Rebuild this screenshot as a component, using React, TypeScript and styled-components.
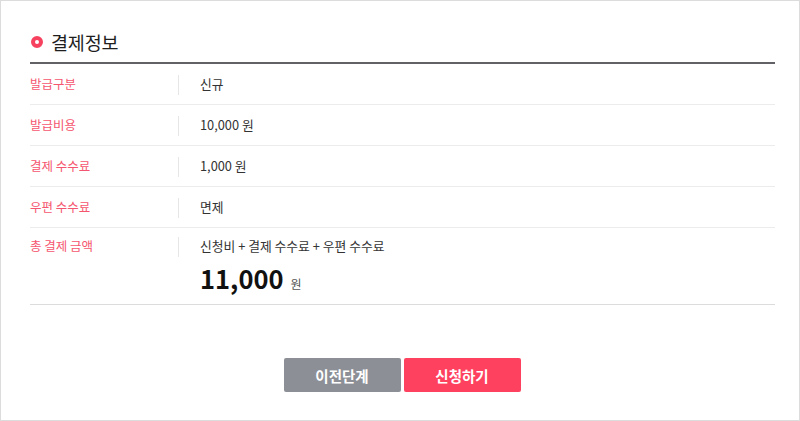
import React from 'react'
import styled, { createGlobalStyle } from 'styled-components'

const GlobalStyle = createGlobalStyle`
  html, body {
    margin: 0;
    padding: 0;
    background: #fff;
  }
  body {
    font-family: 'Noto Sans CJK KR', 'Noto Sans', sans-serif;
  }
`

type Row = {
  label: string
  value: string
}

const rows: Row[] = [
  { label: '발급구분', value: '신규' },
  { label: '발급비용', value: '10,000 원' },
  { label: '결제 수수료', value: '1,000 원' },
  { label: '우편 수수료', value: '면제' },
]

const App = () => {
  return (
    <Page>
      <GlobalStyle />
      <Heading>
        <RingIcon />
        <Title>결제정보</Title>
      </Heading>
      <Table>
        {rows.map(row => (
          <InfoRow key={row.label}>
            <Label>{row.label}</Label>
            <Value>{row.value}</Value>
          </InfoRow>
        ))}
        <InfoRow $total>
          <Label>총 결제 금액</Label>
          <Value>
            <Formula>신청비 + 결제 수수료 + 우편 수수료</Formula>
            <Total>
              <Amount>11,000</Amount>
              <Unit>원</Unit>
            </Total>
          </Value>
        </InfoRow>
      </Table>
      <Buttons>
        <Button $variant='grey'>이전단계</Button>
        <Button $variant='red'>신청하기</Button>
      </Buttons>
    </Page>
  )
}

const Page = styled.div`
  box-sizing: border-box;
  width: 800px;
  height: 421px;
  border: 1px solid #dcdcdc;
  padding: 27px 24px 0 29px;
  background: #fff;
`

const Heading = styled.div`
  display: flex;
  align-items: center;
  gap: 8px;
  height: 28px;
  padding-bottom: 6px;
  border-bottom: 2px solid #616166;
`

const RingIcon = styled.span`
  box-sizing: border-box;
  width: 12px;
  height: 12px;
  margin-left: 1px;
  border-radius: 50%;
  border: 4px solid #f6425f;
  background: #fff;
`

const Title = styled.h2`
  margin: 0;
  font-size: 18.5px;
  font-weight: 400;
  line-height: 28px;
  color: #1e1e1e;
  letter-spacing: -0.01em;
`

const Table = styled.div`
  display: flex;
  flex-direction: column;
`

const InfoRow = styled.div<{ $total?: boolean }>`
  display: flex;
  align-items: flex-start;
  padding: ${p => (p.$total ? '9px 0 8px' : '11px 0')};
  border-bottom: 1px solid ${p => (p.$total ? '#dcdcdc' : '#ececec')};
`

const Label = styled.div`
  width: 148px;
  flex-shrink: 0;
  font-size: 12.5px;
  line-height: 18px;
  color: #f5566f;
`

const Value = styled.div`
  position: relative;
  padding-left: 22px;
  font-size: 12.8px;
  line-height: 18px;
  color: #333;

  &::before {
    content: '';
    position: absolute;
    left: 0;
    top: 0;
    width: 1px;
    height: 20px;
    background: #e6e6e6;
  }
`

const Formula = styled.div`
  color: #333;
`

const Total = styled.div`
  display: flex;
  align-items: baseline;
  gap: 7px;
  margin-top: 5px;
`

const Amount = styled.span`
  font-size: 25.5px;
  font-weight: 700;
  line-height: 36px;
  color: #111;
`

const Unit = styled.span`
  font-size: 12px;
  color: #555;
`

const Buttons = styled.div`
  display: flex;
  justify-content: center;
  gap: 3px;
  margin-top: 53px;
  padding-right: 1px;
`

const Button = styled.button<{ $variant: 'grey' | 'red' }>`
  width: 117px;
  height: 34px;
  border: none;
  border-radius: 2px;
  font-family: 'Noto Sans CJK KR', sans-serif;
  font-size: 14.5px;
  font-weight: 700;
  color: #fff;
  background: ${p => (p.$variant === 'grey' ? '#8d8f96' : '#ff4160')};
  cursor: pointer;
`

export default App
